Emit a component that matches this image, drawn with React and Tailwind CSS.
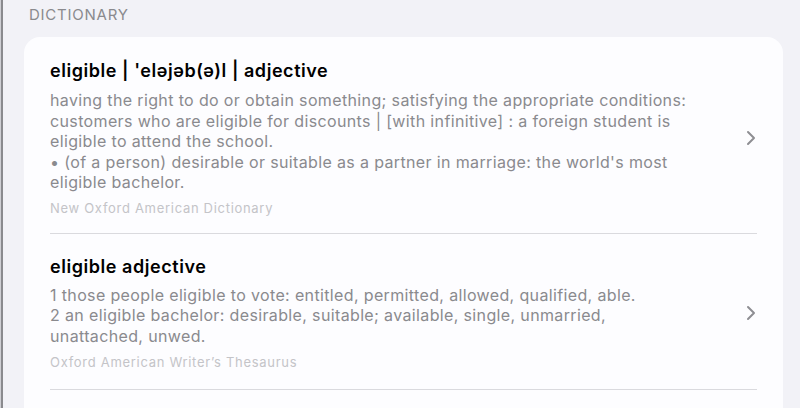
export default function App() {
  const entries = [
    {
      title: "eligible | 'eləjəb(ə)l | adjective",
      lines: [
        "having the right to do or obtain something; satisfying the appropriate conditions:",
        "customers who are eligible for discounts | [with infinitive] : a foreign student is",
        "eligible to attend the school.",
        "• (of a person) desirable or suitable as a partner in marriage: the world's most",
        "eligible bachelor.",
      ],
      source: "New Oxford American Dictionary",
      rowClass: "pb-[17px]",
      bodyClass: "mt-[8px]",
      sourceClass: "mt-[7px]",
    },
    {
      title: "eligible adjective",
      lines: [
        "1 those people eligible to vote: entitled, permitted, allowed, qualified, able.",
        "2 an eligible bachelor: desirable, suitable; available, single, unmarried,",
        "unattached, unwed.",
      ],
      source: "Oxford American Writer’s Thesaurus",
      rowClass: "pb-[19px]",
      bodyClass: "mt-[7px]",
      sourceClass: "mt-[8px]",
    },
  ];

  return (
    <div className="flex h-[408px] w-[800px] overflow-hidden bg-[#f2f2f7] font-['Inter',sans-serif]">
      <div className="w-px bg-[#cfcfd4]" />
      <div className="w-[2px] bg-[#8a8a8e]" />
      <div className="flex flex-1 flex-col pl-[21px] pr-[17px]">
        <div className="pl-[5px] pt-[6px] text-[15px] leading-[18px] tracking-[0.75px] text-[#8a8a8e]">
          DICTIONARY
        </div>
        <div className="mt-[13px] flex-1 rounded-t-[16px] bg-[#fdfdff] px-[26px] pt-px">
          {entries.map((entry) => (
            <div
              key={entry.title}
              className={`flex items-center border-b border-[#dadade] pt-[22px] ${entry.rowClass}`}
            >
              <div className="flex-1">
                <div className="text-[18px] font-semibold leading-[22px] tracking-[0.55px] text-black">
                  {entry.title}
                </div>
                <div className={`text-[16px] leading-[20.5px] tracking-[0.36px] text-[#8a8a8e] ${entry.bodyClass}`}>
                  {entry.lines.map((line) => (
                    <div key={line}>{line}</div>
                  ))}
                </div>
                <div className={`text-[13px] leading-[16px] tracking-[0.7px] text-[#c4c4c8] ${entry.sourceClass}`}>
                  {entry.source}
                </div>
              </div>
              <svg width="10" height="16" viewBox="0 0 10 16" className="mr-px shrink-0">
                <path
                  d="M2 2 L8 8 L2 14"
                  fill="none"
                  stroke="#8e8e93"
                  strokeWidth="2"
                  strokeLinecap="round"
                  strokeLinejoin="round"
                />
              </svg>
            </div>
          ))}
        </div>
      </div>
    </div>
  );
}
